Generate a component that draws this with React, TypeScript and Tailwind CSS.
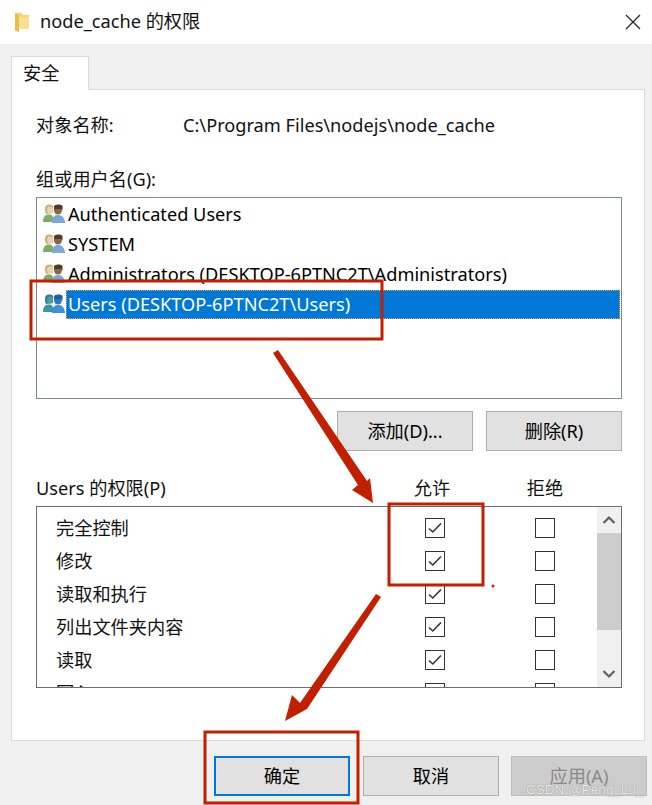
import React from "react";

const FONT = { fontFamily: '"Noto Sans", "Noto Sans CJK SC", sans-serif' };

function UsersIcon({ selected }: { selected?: boolean }) {
  const hairL = selected ? "#2f7f96" : "#c9b377";
  const faceL = selected ? "#4a9aa8" : "#ecd2b4";
  const bodyL = selected ? "#3a96a4" : "#7dab68";
  const hairR = selected ? "#17609a" : "#4f3a28";
  const faceR = selected ? "#2a7ab8" : "#8c6446";
  const bodyR = selected ? "#3c90d6" : "#7ba8d8";
  return (
    <svg width="22" height="19" viewBox="0 0 22 19" className="mt-[-2px] shrink-0">
      <path d="M3 1.500 C5 0 9 0 10 2 L10 9 L3 10 C1.500 7 1.500 3.500 3 1.500 Z" fill={hairL} />
      <ellipse cx="7" cy="6" rx="3" ry="3.600" fill={faceL} />
      <path d="M0 18 C0 13 2 10.500 6 10.500 C9 10.500 10.500 12 10.500 18 Z" fill={bodyL} />
      <path d="M11 2 C13 0 18 0 19.500 2 L19.500 6 L18 6 L12 6 Z" fill={hairR} />
      <ellipse cx="15" cy="6" rx="4" ry="4.500" fill={faceR} />
      <path d="M11 3 C13 1 17 1 19 3.500 L19 5 L12 5 L11.500 7 Z" fill={hairR} />
      <path d="M9 19 C9 13.500 11 11 15 11 C19 11 21.500 13.500 22 19 Z" fill={bodyR} />
    </svg>
  );
}

function GroupRow({ label, selected }: { label: string; selected?: boolean }) {
  return (
    <div className="flex h-[30px] items-center pl-[6px]">
      <UsersIcon selected={selected} />
      {selected ? (
        <span className="ml-[1px] flex h-[29px] flex-1 items-center border border-dotted border-[#f5a040] bg-[#0078d7] pl-[1px] pt-[2px] text-white">
          {label}
        </span>
      ) : (
        <span className="ml-[3px] whitespace-nowrap pt-[2px] text-black">{label}</span>
      )}
    </div>
  );
}

function Check({ checked }: { checked?: boolean }) {
  return (
    <span className="flex h-[20px] w-[20px] items-center justify-center border border-[#333] bg-white">
      {checked && (
        <svg width="14" height="12" viewBox="0 0 14 12">
          <path d="M1 6.500 L4.800 10 L13 1.500" fill="none" stroke="#333" strokeWidth="1.600" />
        </svg>
      )}
    </span>
  );
}

function PermRow({ label, allow }: { label: string; allow?: boolean }) {
  return (
    <div className="flex h-[33px] shrink-0 items-center">
      <span className="w-[388px] pl-[19px] pt-[2px] text-[#111]">{label}</span>
      <Check checked={allow} />
      <span className="w-[90px]" />
      <Check />
    </div>
  );
}

function Btn({ label, primary, disabled }: { label: string; primary?: boolean; disabled?: boolean }) {
  const cls = primary
    ? "border-2 border-[#0078d7] bg-[#e1e1e1] text-black"
    : disabled
      ? "border border-[#bfbfbf] bg-[#cccccc] text-[#8a8a8a]"
      : "border border-[#adadad] bg-[#e1e1e1] text-black";
  return <div className={`flex h-[40px] w-[136px] items-center justify-center pt-[2px] ${cls}`}>{label}</div>;
}

export default function App() {
  return (
    <div className="relative h-[805px] w-[652px] overflow-hidden bg-[#f0f0f0] text-[18.2px]" style={FONT}>
      {/* title bar */}
      <div className="flex h-[44px] items-center bg-white pl-[15px] pr-[11px]">
        <svg width="15" height="20" viewBox="0 0 15 20" className="shrink-0">
          <path d="M0 1 L6 0.500 L8 3 L14 3 L14 17 L4 17 L4 20 L0 18.500 Z" fill="#f3d573" />
          <path d="M0 1 L4 3 L4 20 L0 18.500 Z" fill="#e7bd4e" />
          <path d="M4 5 L14 5 L14 17 L4 17 Z" fill="#f9e08d" />
        </svg>
        <span className="ml-[10px] flex-1 text-[#111]">node_cache 的权限</span>
        <svg width="16" height="16" viewBox="0 0 16 16">
          <path d="M1 1 L15 15 M15 1 L1 15" stroke="#222" strokeWidth="1.200" />
        </svg>
      </div>

      {/* tab strip */}
      <div className="relative z-10 ml-[11px] mt-[12px] flex h-[34px] w-[78px] items-center border border-b-0 border-[#d9d9d9] bg-white pl-[11px] text-[#111]">
        安全
      </div>

      {/* panel */}
      <div className="ml-[11px] mt-[-1px] h-[652px] w-[634px] border border-[#d9d9d9] bg-white pl-[24px] pr-[22px]">
        <div className="mt-[21px] flex h-[28px] items-center pt-[2px] text-[#111]">
          <span className="w-[147px]">对象名称:</span>
          <span>C:\Program Files\nodejs\node_cache</span>
        </div>
        <div className="mt-[26px] flex h-[28px] items-center pt-[2px] text-[#111]">组或用户名(G):</div>
        <div className="mt-[4px] h-[202px] w-[586px] border border-[#828790] pr-[1px] pt-[1px]">
          <GroupRow label="Authenticated Users" />
          <GroupRow label="SYSTEM" />
          <GroupRow label="Administrators (DESKTOP-6PTNC2T\Administrators)" />
          <GroupRow label="Users (DESKTOP-6PTNC2T\Users)" selected />
        </div>
        <div className="mt-[12px] flex w-[586px] justify-end gap-[13px]">
          <Btn label="添加(D)..." />
          <Btn label="删除(R)" />
        </div>
        <div className="mt-[23px] flex h-[28px] items-center pt-[2px] text-[#111]">
          <span className="w-[377px]">Users 的权限(P)</span>
          <span className="w-[38px] text-center">允许</span>
          <span className="w-[75px]" />
          <span className="w-[38px] text-center">拒绝</span>
        </div>
        <div className="mt-[4px] flex h-[182px] w-[586px] overflow-hidden border border-[#6e6e6e]">
          <div className="flex h-full flex-1 flex-col overflow-hidden pt-[4px]">
            <PermRow label="完全控制" allow />
            <PermRow label="修改" allow />
            <PermRow label="读取和执行" allow />
            <PermRow label="列出文件夹内容" allow />
            <PermRow label="读取" allow />
            <PermRow label="写入" />
          </div>
          <div className="flex w-[24px] shrink-0 flex-col bg-[#f0f0f0]">
            <div className="flex h-[26px] items-center justify-center">
              <svg width="14" height="10" viewBox="0 0 14 10">
                <path d="M1.500 8 L7 2.500 L12.500 8" fill="none" stroke="#606060" strokeWidth="2.200" />
              </svg>
            </div>
            <div className="h-[97px] bg-[#cdcdcd]" />
            <div className="flex-1" />
            <div className="flex h-[26px] items-center justify-center">
              <svg width="14" height="10" viewBox="0 0 14 10">
                <path d="M1.500 2 L7 7.500 L12.500 2" fill="none" stroke="#606060" strokeWidth="2.200" />
              </svg>
            </div>
          </div>
        </div>
      </div>

      {/* footer */}
      <div className="mt-[15px] flex justify-end pr-[5px]">
        <Btn label="确定" primary />
        <div className="w-[13px]" />
        <Btn label="取消" />
        <div className="w-[12px]" />
        <Btn label="应用(A)" disabled />
      </div>

      {/* annotations over the screenshot */}
      <svg className="pointer-events-none absolute left-0 top-0" width="652" height="805" viewBox="0 0 652 805">
        <g fill="none" stroke="#c11f00" strokeWidth="3">
          <rect x="31" y="281" width="351" height="58" />
          <rect x="389" y="504" width="94" height="81" />
          <rect x="205" y="732" width="153" height="71" />
        </g>
        <polygon points="278,350 367,481 370,478 373,503 352,490 358,485 273,353" fill="#c11f00" />
        <polygon points="376,594 381,597 307,709 285,721 292,695 300,703" fill="#c11f00" />
        <circle cx="493" cy="586" r="1.500" fill="#c11f00" />
      </svg>
      <span
        className="pointer-events-none absolute left-[526px] top-[780px] text-[13.500px] text-[#ececec]"
        style={{ fontFamily: '"Liberation Sans", sans-serif', textShadow: "0 0 1px #6f6f6f" }}
      >
        CSDN @Peng_Lu_
      </span>
    </div>
  );
}
